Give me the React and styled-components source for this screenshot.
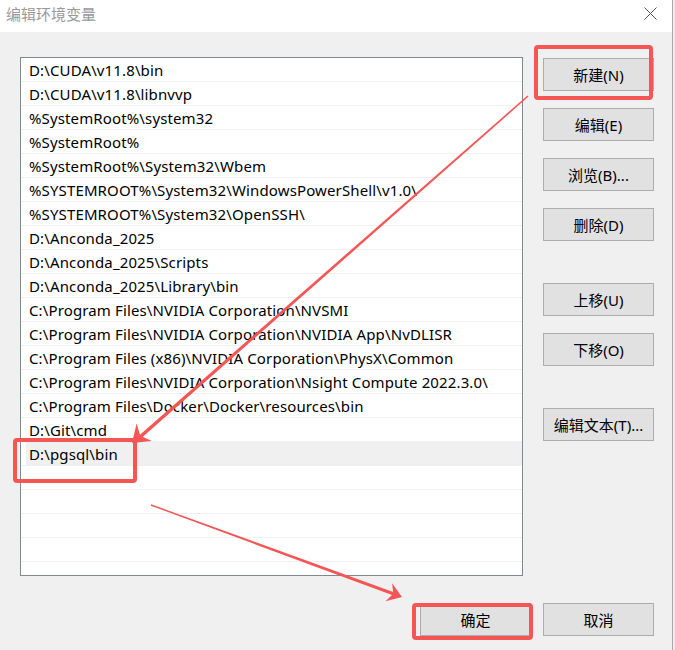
import styled, { createGlobalStyle } from "styled-components";

const paths = [
    "D:\\CUDA\\v11.8\\bin",
    "D:\\CUDA\\v11.8\\libnvvp",
    "%SystemRoot%\\system32",
    "%SystemRoot%",
    "%SystemRoot%\\System32\\Wbem",
    "%SYSTEMROOT%\\System32\\WindowsPowerShell\\v1.0\\",
    "%SYSTEMROOT%\\System32\\OpenSSH\\",
    "D:\\Anconda_2025",
    "D:\\Anconda_2025\\Scripts",
    "D:\\Anconda_2025\\Library\\bin",
    "C:\\Program Files\\NVIDIA Corporation\\NVSMI",
    "C:\\Program Files\\NVIDIA Corporation\\NVIDIA App\\NvDLISR",
    "C:\\Program Files (x86)\\NVIDIA Corporation\\PhysX\\Common",
    "C:\\Program Files\\NVIDIA Corporation\\Nsight Compute 2022.3.0\\",
    "C:\\Program Files\\Docker\\Docker\\resources\\bin",
    "D:\\Git\\cmd",
    "D:\\pgsql\\bin",
    "", "", "", "", "", ""
]

const sideButtons = [
    { id: 0, label: "新建(N)" },
    { id: 1, label: "编辑(E)" },
    { id: 2, label: "浏览(B)..." },
    { id: 3, label: "删除(D)" },
    { id: 4, label: "上移(U)", spaced: true },
    { id: 5, label: "下移(O)" },
    { id: 6, label: "编辑文本(T)...", spaced: true }
]

const RED = "#f45656";

// arrowhead polygon at the end of a line
function head(x1, y1, x2, y2, len, spread) {
    const a = Math.atan2(y1 - y2, x1 - x2);
    const p1 = [x2 + len * Math.cos(a - spread), y2 + len * Math.sin(a - spread)];
    const p2 = [x2 + len * Math.cos(a + spread), y2 + len * Math.sin(a + spread)];
    const n = [x2 + len * 0.55 * Math.cos(a), y2 + len * 0.55 * Math.sin(a)];
    return [[x2, y2], p1, n, p2].map(p => p.join(",")).join(" ");
}

// tapered shaft: thin at the start, wider near the head
function shaft(x1, y1, x2, y2, w1, w2) {
    const a = Math.atan2(y2 - y1, x2 - x1);
    const nx = -Math.sin(a), ny = Math.cos(a);
    return [
        [x1 + nx * w1 / 2, y1 + ny * w1 / 2],
        [x2 + nx * w2 / 2, y2 + ny * w2 / 2],
        [x2 - nx * w2 / 2, y2 - ny * w2 / 2],
        [x1 - nx * w1 / 2, y1 - ny * w1 / 2]
    ].map(p => p.join(",")).join(" ");
}

export default function App() {
    return (
        <>
            <GlobalStyle />
            <Page>
                <Window>
                    <TitleBar>
                        <Title>编辑环境变量</Title>
                        <Close>
                            <svg width="13" height="13" viewBox="0 0 13 13">
                                <path d="M0.5 0.5 L12.5 12.5 M12.5 0.5 L0.5 12.5" stroke="#555" strokeWidth="1" />
                            </svg>
                        </Close>
                    </TitleBar>
                    <Body>
                        <Main>
                            <List>
                                {paths.map((p, i) => (
                                    <Row key={i}>
                                        <Cell $selected={i === 16}>{p}</Cell>
                                    </Row>
                                ))}
                            </List>
                            <Side>
                                {sideButtons.map(b => (
                                    <Button key={b.id} $spaced={b.spaced}>{b.label}</Button>
                                ))}
                            </Side>
                        </Main>
                        <Footer>
                            <Button>确定</Button>
                            <Button>取消</Button>
                        </Footer>
                    </Body>
                </Window>
                <Edge />
                <Marks width="675" height="650" viewBox="0 0 675 650">
                    <g fill="none" stroke={RED} strokeWidth="4" strokeLinejoin="round">
                        <rect x="536" y="47" width="115" height="51" rx="2" />
                        <rect x="15" y="440" width="120" height="41" rx="2" />
                        <rect x="414" y="605" width="117" height="33" rx="2" />
                    </g>
                    <g fill={RED}>
                        <polygon points={shaft(528, 96, 140, 437, 1.6, 3.6)} />
                        <polygon points={head(528, 96, 132, 443, 20, 0.62)} />
                        <polygon points={shaft(151, 505, 394, 594, 1.4, 3.2)} />
                        <polygon points={head(151, 505, 402, 597, 17, 0.6)} />
                    </g>
                </Marks>
            </Page>
        </>
    )
}

const GlobalStyle = createGlobalStyle`
    body {
        margin: 0;
        background: #f0f0f0;
        font-family: "Noto Sans", "Noto Sans CJK SC", sans-serif;
    }
`

const Page = styled.div`
    position: relative;
    width: 675px;
    height: 650px;
    display: flex;
    overflow: hidden;
`

const Window = styled.div`
    width: 672px;
    display: flex;
    flex-direction: column;
    background: #f0f0f0;
`

const Edge = styled.div`
    width: 2px;
    border-left: 1px solid #a9a9a9;
    background: #ececec;
`

const TitleBar = styled.div`
    height: 32px;
    background: #ffffff;
    display: flex;
    align-items: center;
    justify-content: space-between;
    padding: 0 15px 0 6px;
    box-sizing: border-box;
`

const Title = styled.span`
    font-family: "Noto Sans CJK SC", sans-serif;
    font-size: 15px;
    color: #999999;
    margin-top: -6px;
`

const Close = styled.div`
    display: flex;
    margin-top: -5px;
`

const Body = styled.div`
    flex: 1;
    display: flex;
    flex-direction: column;
    padding: 25px 0 0 20px;
`

const Main = styled.div`
    display: flex;
    gap: 20px;
`

const List = styled.div`
    width: 501px;
    height: 517px;
    border: 1px solid #828790;
    background: #ffffff;
    overflow: hidden;
`

const Row = styled.div`
    height: 23px;
    margin-left: 1px;
    border-bottom: 1px solid #f0f0f0;
    display: flex;
`

const Cell = styled.div`
    flex: 1;
    height: 23px;
    box-sizing: border-box;
    margin-left: 4px;
    padding: 1px 0 0 3px;
    font-size: 15px;
    line-height: 22px;
    letter-spacing: 0.13px;
    color: #000000;
    white-space: nowrap;
    background: ${props => props.$selected ? "#f0f0f0" : "transparent"};
`

const Side = styled.div`
    display: flex;
    flex-direction: column;
    gap: 17px;
    padding-top: 1px;
`

const Button = styled.div`
    width: 109px;
    height: 30px;
    padding-bottom: 1px;
    border: 1px solid #adadad;
    background: #e1e1e1;
    display: flex;
    align-items: center;
    justify-content: center;
    font-family: "Noto Sans", "Noto Sans CJK SC", sans-serif;
    font-size: 15px;
    color: #000000;
    margin-top: ${props => props.$spaced ? "25px" : "0"};
`

const Footer = styled.div`
    display: flex;
    justify-content: flex-end;
    gap: 12px;
    margin-top: 27px;
    padding-right: 18px;
`

const Marks = styled.svg`
    position: absolute;
    left: 0;
    top: 0;
    pointer-events: none;
`
